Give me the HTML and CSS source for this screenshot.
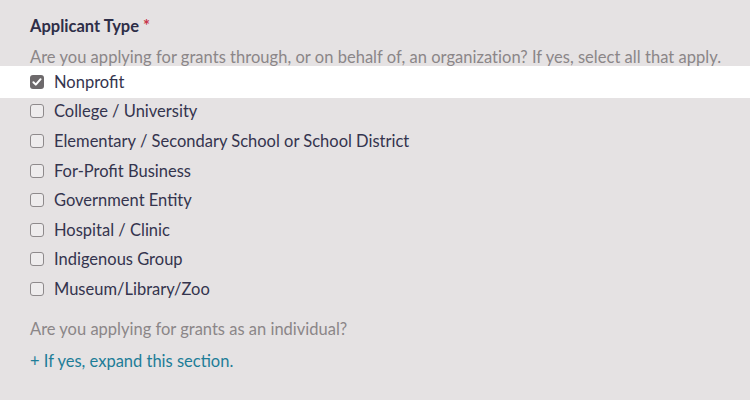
FILE: index.html
```html
<!DOCTYPE html>
<html>
<head>
<meta charset="utf-8">
<link rel="stylesheet" href="styles.css">
</head>
<body>
<div class="field">
  <div class="label">Applicant Type <span class="req">*</span></div>
  <div class="help">Are you applying for grants through, or on behalf of, an organization? If yes, select all that apply.</div>
  <ul class="options">
    <li class="opt active"><span class="box checked"><svg viewBox="0 0 14 14" width="14" height="14"><path d="M3.4 7.2 L5.8 9.6 L10.6 4.2" fill="none" stroke="#fff" stroke-width="2" stroke-linecap="round" stroke-linejoin="round"/></svg></span><span class="txt">Nonprofit</span></li>
    <li class="opt"><span class="box"></span><span class="txt">College / University</span></li>
    <li class="opt"><span class="box"></span><span class="txt">Elementary / Secondary School or School District</span></li>
    <li class="opt"><span class="box"></span><span class="txt">For-Profit Business</span></li>
    <li class="opt"><span class="box"></span><span class="txt">Government Entity</span></li>
    <li class="opt"><span class="box"></span><span class="txt">Hospital / Clinic</span></li>
    <li class="opt"><span class="box"></span><span class="txt">Indigenous Group</span></li>
    <li class="opt"><span class="box"></span><span class="txt">Museum/Library/Zoo</span></li>
  </ul>
  <div class="help2">Are you applying for grants as an individual?</div>
  <a class="expand" href="#">+ If yes, expand this section.</a>
</div>
</body>
</html>
```
FILE: styles.css
```css
html, body {
  margin: 0;
  padding: 0;
  background: #e5e2e3;
  width: 750px;
  height: 400px;
  overflow: hidden;
}
body {
  font-family: Lato, "Open Sans", sans-serif;
  font-size: 16.5px;
  color: #34344e;
}
.field {
  padding-top: 15px;
}
.label {
  padding-left: 30px;
  font-weight: 700;
  color: #2e2e48;
  line-height: 22px;
}
.req {
  color: #c8344a;
}
.help {
  padding-left: 30px;
  margin-top: 9px;
  color: #8b8688;
  line-height: 22px;
  letter-spacing: 0.03px;
}
.options {
  list-style: none;
  margin: 0;
  padding: 0;
  margin-top: -2px;
}
.opt {
  display: flex;
  align-items: center;
  height: 29.6px;
  padding-left: 30px;
}
.opt.active {
  background: #ffffff;
  height: 31.6px;
  margin: 0 0 -1px 0;
}
.box {
  width: 12px;
  height: 12px;
  border: 1px solid #8e8a8c;
  border-radius: 3px;
  background: #eeeced;
  display: flex;
  align-items: center;
  justify-content: center;
  flex-shrink: 0;
}
.box.checked {
  width: 14px;
  height: 14px;
  border: none;
  background: #6d696b;
}
.box svg {
  display: block;
}
.txt {
  margin-left: 10px;
  line-height: 20px;
}
.help2 {
  padding-left: 30px;
  margin-top: 14px;
  color: #8b8688;
  line-height: 22px;
}
.expand {
  display: block;
  margin-left: 30px;
  margin-top: 10px;
  color: #1d7d98;
  text-decoration: none;
  line-height: 22px;
}
```
